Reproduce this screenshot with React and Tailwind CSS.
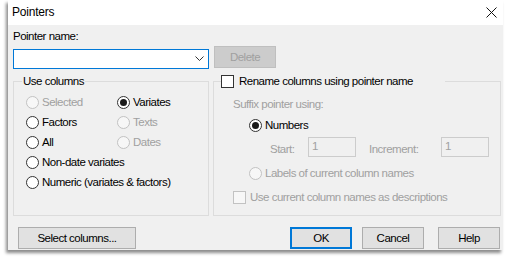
import React from "react";

const font = { fontFamily: '"Liberation Sans", Arial, sans-serif' };

function Radio({ checked, disabled }) {
  return (
    <span
      className={`w-[13px] h-[13px] rounded-full border flex items-center justify-center shrink-0 ${
        disabled ? "border-[#c2c2c2] bg-[#f7f7f7]" : "border-[#333333] bg-white"
      }`}
    >
      {checked && <span className="w-[7px] h-[7px] rounded-full bg-[#1a1a1a]" />}
    </span>
  );
}

function Option({ label, checked, disabled }) {
  return (
    <div className="flex items-center h-[20px] gap-[3px]">
      <Radio checked={checked} disabled={disabled} />
      <span className={disabled ? "text-[#a0a0a0]" : "text-black"}>{label}</span>
    </div>
  );
}

function Button({ children, className = "", focused }) {
  return (
    <div
      className={`h-[22px] flex items-center justify-center bg-[#e1e1e1] ${
        focused ? "border-2 border-[#0078d7]" : "border border-[#adadad]"
      } ${className}`}
    >
      {children}
    </div>
  );
}

export default function App() {
  return (
    <div className="w-[509px] h-[262px] bg-white overflow-hidden" style={font}>
      <div className="ml-[8px] w-[495px] h-[250px] bg-[#f0f0f0] shadow-[-2px_3px_3px_rgba(0,0,0,0.45)] text-[11.5px] tracking-[-0.5px] leading-[13px]">
        {/* title bar */}
        <div className="h-[25px] bg-white flex items-center justify-between pl-[4px] pr-[6px]">
          <span className="text-[12px] tracking-[-0.2px] text-black">Pointers</span>
          <svg width="11" height="11" viewBox="0 0 11 11" className="mr-[0px]">
            <path d="M0.5 0.5L10.5 10.5M10.5 0.5L0.5 10.5" stroke="#111" strokeWidth="1" />
          </svg>
        </div>

        <div className="pl-[5px] pt-[5px]">
          <div className="h-[13px]">Pointer name:</div>

          <div className="flex items-start mt-[3px]">
            <div className="mt-[3px] w-[196px] h-[20px] bg-white border border-[#0078d7] flex items-center justify-end pr-[4px]">
              <svg width="9" height="6" viewBox="0 0 9 6">
                <path d="M0.5 0.5L4.5 4.5L8.5 0.5" stroke="#333" strokeWidth="1" fill="none" />
              </svg>
            </div>
            <div className="ml-[5px] w-[62px] h-[22px] bg-[#cccccc] border border-[#bfbfbf] flex items-center justify-center text-[#a0a0a0]">
              Delete
            </div>
          </div>

          <div className="flex mt-[12px]">
            {/* Use columns */}
            <div className="relative w-[196px] h-[135px] border border-[#dcdcdc] pl-[12px] pt-[10px]">
              <span className="absolute -top-[7px] left-[8px] bg-[#f0f0f0] px-[1px]">Use columns</span>
              <div className="grid grid-cols-[91px_auto]">
                <Option label="Selected" disabled />
                <Option label="Variates" checked />
                <Option label="Factors" />
                <Option label="Texts" disabled />
                <Option label="All" />
                <Option label="Dates" disabled />
              </div>
              <Option label="Non-date variates" />
              <Option label="Numeric (variates & factors)" />
            </div>

            {/* Rename */}
            <div className="relative ml-[4px] w-[288px] h-[135px] border border-[#dcdcdc] pt-[16px]">
              <div className="absolute -top-[7px] left-[7px] w-[224px] h-[13px] bg-[#f0f0f0] flex items-center gap-[5px]">
                <span className="w-[13px] h-[13px] border border-[#333333] bg-white shrink-0" />
                <span>Rename columns using pointer name</span>
              </div>
              <div className="pl-[19px] text-[#a0a0a0]">Suffix pointer using:</div>
              <div className="pl-[35px] mt-[4px]">
                <Option label="Numbers" checked />
              </div>
              <div className="flex items-end mt-[2px] pl-[56px] text-[#a0a0a0]">
                <span className="w-[38px] mb-[1px]">Start:</span>
                <div className="w-[48px] h-[20px] border border-[#cccccc] pl-[3px] pt-[2px]">1</div>
                <span className="ml-[13px] w-[72px] mb-[1px]">Increment:</span>
                <div className="w-[48px] h-[20px] border border-[#cccccc] pl-[3px] pt-[2px]">1</div>
              </div>
              <div className="pl-[35px] mt-[6px]">
                <Option label="Labels of current column names" disabled />
              </div>
              <div className="pl-[19px] mt-[4px] flex items-center h-[20px] gap-[4px] text-[#a0a0a0]">
                <span className="w-[13px] h-[13px] border border-[#c2c2c2] bg-[#f7f7f7] shrink-0" />
                <span>Use current column names as descriptions</span>
              </div>
            </div>
          </div>

          <div className="flex mt-[11px] pl-[5px]">
            <Button className="w-[118px]">Select columns...</Button>
            <Button className="w-[62px] ml-[154px]" focused>OK</Button>
            <Button className="w-[62px] ml-[10px]">Cancel</Button>
            <Button className="w-[62px] ml-[14px]">Help</Button>
          </div>
        </div>
      </div>
    </div>
  );
}
